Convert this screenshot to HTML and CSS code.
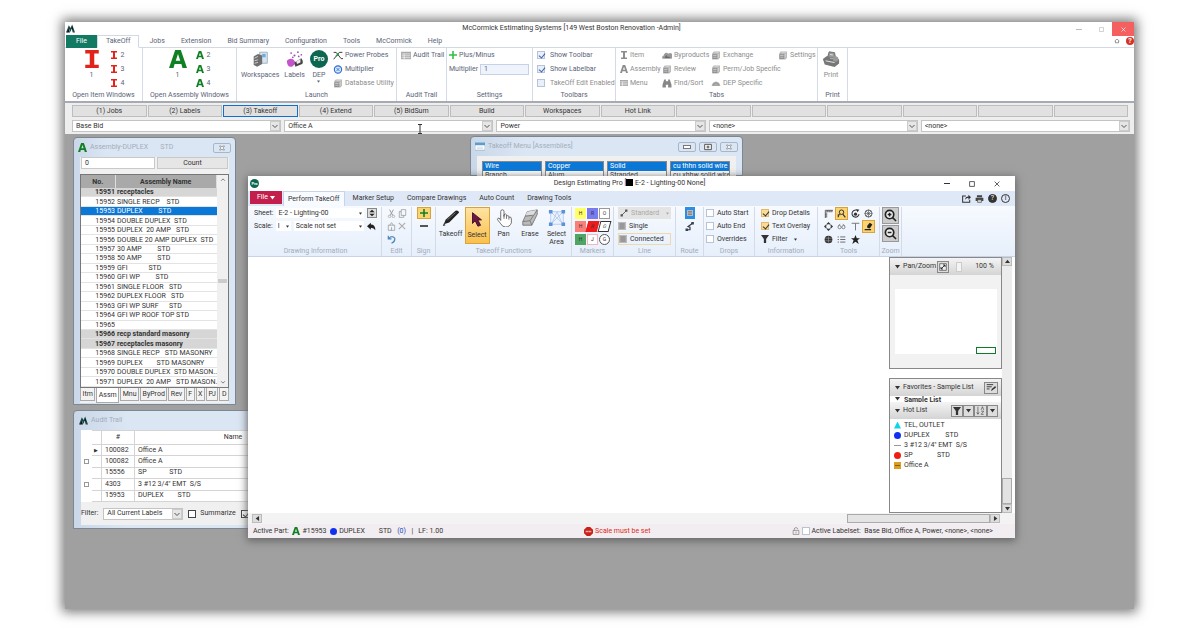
FILE: index.html
```
<!DOCTYPE html>
<html lang="en">
  <head>
    <meta charset="UTF-8" />
    <meta name="viewport" content="width=device-width, initial-scale=1.0" />
    <title>McCormick Estimating Systems</title>
    <link rel="stylesheet" href="styles.css">
  </head>
  <body>
    <svg class="defs" width="0" height="0" aria-hidden="true">
      <symbol id="logo" viewBox="0 0 16 16"><path d="M0 15 5 2l3 5 3-6 5 14h-4l-2-7-2 6-3-6-2 7z" fill="#17494a"/><path d="M2 15 5 7l2 8zM10 8l1-4 2 6z" fill="#111"/></symbol>
      <symbol id="beamI" viewBox="0 0 12 16"><path d="M0 0h12v3H8v10h4v3H0v-3h4V3H0z" fill="currentColor"/></symbol>
      <symbol id="bigA" viewBox="0 0 16 16"><path fill-rule="evenodd" d="M5.500 0h5L16 16h-4l-1-3.500H5L4 16H0zM8 3.500 6 9.500h4z" fill="currentColor"/></symbol>
      <symbol id="chev" viewBox="0 0 8 8"><path d="m1.500 3 2.500 2.500L6.500 3" fill="none" stroke="#555"/></symbol>
      <symbol id="down" viewBox="0 0 8 8"><path d="M0 1.500h8L4 7z" fill="currentColor"/></symbol>
      <symbol id="xmark" viewBox="0 0 10 10"><path d="m1 1 8 8M9 1 1 9" fill="none" stroke="currentColor" stroke-width="1.300"/></symbol>
      <symbol id="boxmark" viewBox="0 0 10 10"><path d="M1 1h8v8H1z" fill="none" stroke="currentColor" stroke-width="1.300"/></symbol>
      <symbol id="restore" viewBox="0 0 12 10"><path d="M1 1h10v8H1z" fill="#fff" stroke="#555" stroke-width="1.500"/><path d="M4 3h4v4H4z" fill="#777"/></symbol>
      <symbol id="shutx" viewBox="0 0 12 10"><path d="M1 1h3l2 2 2-2h3L8 5l3 4H8L6 7 4 9H1l3-4z" fill="#fff" stroke="#555"/></symbol>
      <symbol id="sheet" viewBox="0 0 16 12"><path d="M0 0h16v12H0z" fill="currentColor"/><path d="M1 3.500h14M1 6.500h14M1 9.500h14M5 3v9" stroke="#fff"/></symbol>
      <symbol id="menuwin" viewBox="0 0 16 14"><path d="M0 1h16v12H0z" fill="#fff" stroke="#7ba9cc"/><path d="M0 1h16v4H0z" fill="#5d9ccb"/><path d="M3 8h10M3 10.500h10" stroke="#b8c8d6"/></symbol>
      <symbol id="stack" viewBox="0 0 16 16"><path d="M4 1h11v11l-3 3H1V5z" fill="#b5b5b5"/><path d="M2 6h8v8H2z" fill="#8d8d8d"/><path d="M5 3h8M3 8h6M3 11h6M12 5v7" stroke="#eee"/></symbol>
      <symbol id="cloud" viewBox="0 0 16 12"><path d="M1 11a3 3 0 0 1 2-5 4 4 0 0 1 7-3 4 4 0 0 1 5 8z" fill="#999"/><path d="m4 10 3-5 3 5zM9 10l2-3 2 3z" fill="#666"/></symbol>
      <symbol id="disk" viewBox="0 0 16 12"><path d="M1 10a7 7 0 0 1 14 0z" fill="#bbb"/><path d="M3 10a5 5 0 0 1 10 0M8 3v7M5 5v5m6-5v5" fill="none" stroke="#8a8a8a"/></symbol>
      <symbol id="bino" viewBox="0 0 16 16"><path d="M3 1h3v3h4V1h3l3 9v5h-6v-5H6v5H0v-5z" fill="#888"/></symbol>
      <symbol id="printer" viewBox="0 0 20 18"><path d="m8 1 6 1 1 6H6z" fill="#999" stroke="#666"/><path d="m1 9 4-3h3l1 3h6l2-2 2 3v4l-5 4L3 15z" fill="#777"/><path d="m4 11 10 2M9 4l3 .5" stroke="#eee"/><circle cx="15" cy="9" r="3" fill="#999"/></symbol>
      <symbol id="probe" viewBox="0 0 16 14"><path d="M1 2h4l8 10h3M1 13l5-6 4-5h5" fill="none" stroke="#333" stroke-width="1.500"/><path d="m5 8 4-4" stroke="#2a9a3c" stroke-width="2.500"/></symbol>
      <symbol id="multi" viewBox="0 0 16 16"><circle cx="8" cy="8" r="6.500" fill="#d9e9ff" stroke="#2b6cd4" stroke-width="2"/><path d="m5 5 6 6m0-6-6 6" stroke="#2b6cd4" stroke-width="1.500"/></symbol>
      <symbol id="work" viewBox="0 0 20 20"><path d="M9 2h9v13H9z" fill="#d5e5f2" stroke="#9ab"/><path d="m2 7 5-3 5 2v10l-6 3-4-2z" fill="#6e6e6e"/><path d="m3 9 4-2M3 12l4-1M3 15l4-1" stroke="#ddd"/><path d="M12 4h4v4h-4z" fill="#6faad8"/></symbol>
      <symbol id="labels" viewBox="0 0 20 20"><path d="M1 12q4-4 8-1l3 4-5 4q-6 1-6-7z" fill="#c455c9"/><path d="m10 14 8-5q3 4 1 7l-8 3z" fill="#444"/><path d="m12 13 5-3v4l-4 2z" fill="#eee"/><g fill="#9a4bb4"><circle cx="6" cy="3" r="1"/><circle cx="10" cy="6" r="1.200"/><circle cx="14" cy="2" r="1"/><circle cx="15" cy="7" r="1"/><circle cx="8" cy="8" r="1"/><circle cx="18" cy="5" r="1"/></g></symbol>
      <symbol id="plus" viewBox="0 0 10 10"><path d="M5 0v10M0 5h10" stroke="currentColor" stroke-width="2"/></symbol>
      <symbol id="home" viewBox="0 0 10 8"><path d="m1 4 4-3 4 3M2.500 4v3h5V4" fill="none" stroke="#555"/></symbol>
      <symbol id="updown" viewBox="0 0 12 10"><path d="m2 4 4-4 4 4zM2 6l4 4 4-4z" fill="#222"/></symbol>
      <symbol id="back" viewBox="0 0 14 12"><path d="M6 0v3q7 0 7 9-2-4-7-4v3L0 5.500z" fill="#222"/></symbol>
      <symbol id="cut" viewBox="0 0 14 14"><path d="m4 1 5 9M10 1 5 10" stroke="#999" stroke-width="1.500"/><circle cx="4" cy="11.500" r="2" fill="none" stroke="#999"/><circle cx="10" cy="11.500" r="2" fill="none" stroke="#999"/></symbol>
      <symbol id="copy" viewBox="0 0 14 14"><path d="M5 1h7v9H5zM5 4H2v9h7v-3" fill="none" stroke="#888"/></symbol>
      <symbol id="paste" viewBox="0 0 14 14"><path d="M2 5h10v8H2zM4 5l3-4 3 4M7 8v5" fill="none" stroke="#888"/></symbol>
      <symbol id="undo" viewBox="0 0 14 14"><path d="M2 1v5h5M3 5q5-5 9 0 1 5-5 8" fill="none" stroke="#4a86b8" stroke-width="1.800"/></symbol>
      <symbol id="pen" viewBox="0 0 20 20"><path d="m2 17 2-5L15 2q3-1 4 2L8 15z" fill="#222"/><path d="m1 19 1-3 2 2z" fill="#222"/><path d="m6 12 9-8" stroke="#777"/></symbol>
      <symbol id="arrow" viewBox="0 0 14 20"><path d="M2 3v12l3-3 3 6 3-1-3-6h4z" fill="#6b1743" stroke="#3d1029"/></symbol>
      <symbol id="hand" viewBox="0 0 20 22"><path d="M6 14V3q0-2 2-2t2 2v6-2q2-2 3 0v2q2-2 3 0v1q3-1 3 2v5q-2 5-7 5-4 0-6-4l-4-5q0-2 2-2z" fill="#fff" stroke="#555"/><path d="M10 8v4m3-3v3m3-2v3" stroke="#555"/></symbol>
      <symbol id="erase" viewBox="0 0 20 20"><path d="m7 3 11-2v5L12 18H2v-4z" fill="#bbb" stroke="#777"/><path d="m2 14 8-1 8-12M10 13l2 5M5 8l8-1" fill="none" stroke="#777"/><path d="m7 3 10-2-3 5-9 1z" fill="#ddd"/></symbol>
      <symbol id="area" viewBox="0 0 20 20"><path d="M3 3h14v14H3zM3 3l14 14M17 3 3 17M10 3 4 17M10 3l6 14" fill="#eaf3ff" stroke="#b5cceb"/><g fill="#5d93d6"><path d="M1 1h4v4H1zM15 1h4v4h-4zM1 15h4v4H1zM15 15h4v4h-4z"/></g></symbol>
      <symbol id="line" viewBox="0 0 14 14"><path d="m3 11 8-8" stroke="#555" stroke-width="1.500"/><path d="M1 9h4v4H1zM9 1h4v4H9z" fill="#555"/></symbol>
      <symbol id="para" viewBox="0 0 12 12"><path d="M0 0h12v12H0z" fill="#bbb"/><path d="M2 3h8M2 6h8M2 9h8" stroke="#555"/></symbol>
      <symbol id="route" viewBox="0 0 14 14"><path d="M2 12h5V8l-3-1 7-5" fill="none" stroke="#334" stroke-width="1.800"/><path d="M9 0h4v4H9zM0 10h4v4H0z" fill="#345"/></symbol>
      <symbol id="funnel" viewBox="0 0 14 14"><path d="M0 0h14L9 7v7H5V7z" fill="#333"/></symbol>
      <symbol id="ruler" viewBox="0 0 14 14"><path d="M2 14V2h12v3H5v9z" fill="#bbb"/><path d="M2 2h12M2 2v12M5 2v3m3-3v3m3-3v3M2 8h3m-3 3h3" stroke="#333"/></symbol>
      <symbol id="find" viewBox="0 0 14 14"><circle cx="7" cy="5" r="3.500" fill="none" stroke="#333" stroke-width="1.500"/><path d="m9 8 4 5M2 13V9h3" stroke="#333" stroke-width="1.800" fill="none"/></symbol>
      <symbol id="spin" viewBox="0 0 14 14"><path d="M9 2a5.500 5.500 0 1 0 3.500 6" fill="none" stroke="#333" stroke-width="1.600"/><circle cx="7" cy="8" r="2.500" fill="#333"/><path d="m8 0 5 1-3 4z" fill="#333"/></symbol>
      <symbol id="globe" viewBox="0 0 14 14"><circle cx="7" cy="7" r="5.500" fill="none" stroke="#444" stroke-width="1.300"/><path d="M7 1v12M1 7h12M3 3l8 8m0-8-8 8" stroke="#555"/></symbol>
      <symbol id="target" viewBox="0 0 14 14"><path d="m7 0 3 3H4zM7 14l3-3H4zM0 7l3-3v6zM14 7l-3-3v6z" fill="#333"/><circle cx="7" cy="7" r="4" fill="none" stroke="#444"/></symbol>
      <symbol id="glasses" viewBox="0 0 14 14"><circle cx="4" cy="8" r="2.500" fill="none" stroke="#555"/><circle cx="10" cy="8" r="2.500" fill="none" stroke="#555"/><path d="m2 6 3-3m7 3L9 3" stroke="#555"/></symbol>
      <symbol id="tee" viewBox="0 0 14 14"><path d="M1 2h12M7 2v11" stroke="#777" stroke-width="1.500"/></symbol>
      <symbol id="mark" viewBox="0 0 14 14"><path d="m5 6 4-5 4 3-4 6-4-1zM1 11h10v2H1z" fill="#222"/></symbol>
      <symbol id="ball" viewBox="0 0 14 14"><circle cx="7" cy="7" r="6" fill="#333"/><path d="M2 5h10M2 9h10M7 2v10" stroke="#999"/></symbol>
      <symbol id="list" viewBox="0 0 14 14"><path d="M1 3h2m2 0h8M1 7h2m2 0h8M1 11h2m2 0h8" stroke="#555" stroke-width="1.300"/></symbol>
      <symbol id="star" viewBox="0 0 14 14"><path d="m7 0 2 5h5l-4 3 2 6-5-3.500L2 14l2-6-4-3h5z" fill="#222"/></symbol>
      <symbol id="zin" viewBox="0 0 14 14"><circle cx="6" cy="6" r="4.500" fill="#eee" stroke="#222" stroke-width="1.800"/><path d="m9 9 4 4M4 6h4M6 4v4" stroke="#222" stroke-width="1.600"/></symbol>
      <symbol id="zout" viewBox="0 0 14 14"><circle cx="6" cy="6" r="4.500" fill="#eee" stroke="#222" stroke-width="1.800"/><path d="m9 9 4 4M4 6h4" stroke="#222" stroke-width="1.600"/></symbol>
      <symbol id="share" viewBox="0 0 14 14"><path d="M6 3H1v10h11V9" fill="none" stroke="#333" stroke-width="1.600"/><path d="M5 9q0-5 5-5V1l4 4-4 4V6q-3 0-5 3z" fill="#333"/></symbol>
      <symbol id="print2" viewBox="0 0 14 14"><path d="M3 2h8v3H3zM1 6h12v5H1z" fill="#444"/><path d="M4 9h6v4H4z" fill="#ddd" stroke="#444"/></symbol>
      <symbol id="grow" viewBox="0 0 12 12"><path d="M1 1h10v10H1z" fill="#eee" stroke="#444"/><path d="m3 9 6-6M6 3h3v3M3 6v3h3" fill="none" stroke="#222" stroke-width="1.300"/></symbol>
      <symbol id="edit" viewBox="0 0 14 12"><path d="M1 2h9M1 5h7M1 8h4" stroke="#333" stroke-width="1.300"/><path d="m7 11 1-3 5-4 1 2-5 4z" fill="#333"/></symbol>
      <symbol id="sort" viewBox="0 0 14 14"><path d="M3 1v11M1 10l2 3 2-3M8 6l2-5 2 5M8 8h4l-4 5h4" fill="none" stroke="#444"/></symbol>
      <symbol id="lock" viewBox="0 0 12 14"><path d="M1 6h10v7H1zM3 6V4q0-3 3-3t3 3M6 8v3" fill="none" stroke="#666"/></symbol>
      <symbol id="stop" viewBox="0 0 16 16"><path d="M5 0h6l5 5v6l-5 5H5l-5-5V5z" fill="#c9201a"/><path d="M3 8h10" stroke="#f7c9c6" stroke-width="3" stroke-dasharray="2 .7"/></symbol>
    </svg>

    <main class="app">
      <header class="titlebar">
        <svg class="i9"><use href="#logo"/></svg>
        <h1>McCormick Estimating Systems [149 West Boston Renovation -Admin]</h1>
        <div class="app-controls">
          <button aria-label="Minimize"><i class="dash"></i></button>
          <button aria-label="Maximize"><svg class="i5"><use href="#boxmark"/></svg></button>
          <button class="shut" aria-label="Close"><svg class="i5"><use href="#xmark"/></svg></button>
        </div>
      </header>

      <nav class="tabs">
        <button class="file">File</button>
        <button class="on">TakeOff</button>
        <button>Jobs</button>
        <button>Extension</button>
        <button>Bid Summary</button>
        <button>Configuration</button>
        <button>Tools</button>
        <button>McCormick</button>
        <button>Help</button>
        <span class="push"></span>
        <svg class="i6"><use href="#home"/></svg>
        <span class="help">?</span>
      </nav>

      <section class="ribbon">
        <div class="group g-item">
          <div class="tools">
            <button class="big red"><svg class="glyph"><use href="#beamI"/></svg>1</button>
            <div class="col red">
              <button><svg class="i8"><use href="#beamI"/></svg>2</button>
              <button><svg class="i8"><use href="#beamI"/></svg>3</button>
              <button><svg class="i8"><use href="#beamI"/></svg>4</button>
            </div>
          </div>
          <h2>Open Item Windows</h2>
        </div>
        <div class="group g-asm">
          <div class="tools">
            <button class="big green"><svg class="glyph"><use href="#bigA"/></svg>1</button>
            <div class="col green">
              <button><svg class="i8"><use href="#bigA"/></svg>2</button>
              <button><svg class="i8"><use href="#bigA"/></svg>3</button>
              <button><svg class="i8"><use href="#bigA"/></svg>4</button>
            </div>
          </div>
          <h2>Open Assembly Windows</h2>
        </div>
        <div class="group g-launch">
          <div class="tools">
            <button class="big"><svg class="glyph"><use href="#work"/></svg>Workspaces</button>
            <button class="big"><svg class="glyph"><use href="#labels"/></svg>Labels</button>
            <button class="big"><span class="pro">Pro</span>DEP<svg class="i3"><use href="#down"/></svg></button>
            <div class="col">
              <button><svg class="i10"><use href="#probe"/></svg>Power Probes</button>
              <button><svg class="i10"><use href="#multi"/></svg>Multiplier</button>
              <button class="off"><svg class="i10"><use href="#stack"/></svg>Database Utility</button>
            </div>
          </div>
          <h2>Launch</h2>
        </div>
        <div class="group g-audit">
          <div class="tools">
            <div class="col"><button><svg class="i10 silver"><use href="#sheet"/></svg>Audit Trail</button></div>
          </div>
          <h2>Audit Trail</h2>
        </div>
        <div class="group g-set">
          <div class="tools">
            <div class="col">
              <button><svg class="i8 lime"><use href="#plus"/></svg>Plus/Minus</button>
              <div class="field"><label for="mult">Multiplier</label><input id="mult" type="text" value="1"></div>
            </div>
          </div>
          <h2>Settings</h2>
        </div>
        <div class="group g-bars">
          <div class="tools">
            <div class="col">
              <label><input type="checkbox" checked>Show Toolbar</label>
              <label><input type="checkbox" checked>Show Labelbar</label>
              <label class="off"><input type="checkbox" disabled>TakeOff Edit Enabled</label>
            </div>
          </div>
          <h2>Toolbars</h2>
        </div>
        <div class="group g-tabs">
          <div class="tools off">
            <div class="col">
              <button><svg class="i8"><use href="#beamI"/></svg>Item</button>
              <button><svg class="i8"><use href="#bigA"/></svg>Assembly</button>
              <button><svg class="i8 silver"><use href="#sheet"/></svg>Menu</button>
            </div>
            <div class="col">
              <button><svg class="i10"><use href="#cloud"/></svg>Byproducts</button>
              <button><svg class="i10"><use href="#stack"/></svg>Review</button>
              <button><svg class="i10"><use href="#bino"/></svg>Find/Sort</button>
            </div>
            <div class="col">
              <button><svg class="i10"><use href="#stack"/></svg>Exchange</button>
              <button><svg class="i10"><use href="#stack"/></svg>Perm/Job Specific</button>
              <button><svg class="i10"><use href="#disk"/></svg>DEP Specific</button>
            </div>
            <div class="col"><button><svg class="i10"><use href="#stack"/></svg>Settings</button></div>
          </div>
          <h2>Tabs</h2>
        </div>
        <div class="group g-print">
          <div class="tools off">
            <button class="big"><svg class="glyph"><use href="#printer"/></svg>Print</button>
          </div>
          <h2>Print</h2>
        </div>
      </section>

      <div class="quick">
        <button>(1) Jobs</button>
        <button>(2) Labels</button>
        <button class="on">(3) Takeoff</button>
        <button>(4) Extend</button>
        <button>(5) BidSum</button>
        <button>Build</button>
        <button>Workspaces</button>
        <button>Hot Link</button>
        <button aria-label="Unused"></button>
        <button aria-label="Unused"></button>
        <button aria-label="Unused"></button>
        <button aria-label="Unused"></button>
        <button aria-label="Unused"></button>
        <button aria-label="Unused"></button>
      </div>

      <div class="labelbar">
        <div class="combo"><select aria-label="Label 1"><option>Base Bid</option></select><svg><use href="#chev"/></svg></div>
        <div class="combo"><select aria-label="Label 2"><option>Office A</option></select><svg><use href="#chev"/></svg></div>
        <div class="combo"><select aria-label="Label 3"><option>Power</option></select><svg><use href="#chev"/></svg></div>
        <div class="combo"><select aria-label="Label 4"><option>&lt;none&gt;</option></select><svg><use href="#chev"/></svg></div>
        <div class="combo"><select aria-label="Label 5"><option>&lt;none&gt;</option></select><svg><use href="#chev"/></svg></div>
      </div>

      <div class="desk">
        <!-- assembly list -->
        <section class="win win-asm">
          <header>
            <svg class="i9 green"><use href="#bigA"/></svg>
            <h2>Assembly-DUPLEX &nbsp; &nbsp; &nbsp; STD</h2>
            <button aria-label="Close"><svg class="i6"><use href="#shutx"/></svg></button>
          </header>
          <div class="count">
            <input type="text" value="0" aria-label="Quantity">
            <button>Count</button>
          </div>
          <div class="list">
            <table>
              <thead><tr><th>No.</th><th>Assembly Name</th></tr></thead>
              <tbody>
                <tr class="head"><td>15951</td><td>receptacles</td></tr>
                <tr><td>15952</td><td>SINGLE RECP    STD</td></tr>
                <tr class="sel"><td>15953</td><td>DUPLEX         STD</td></tr>
                <tr><td>15954</td><td>DOUBLE DUPLEX  STD</td></tr>
                <tr><td>15955</td><td>DUPLEX  20 AMP   STD</td></tr>
                <tr><td>15956</td><td>DOUBLE 20 AMP DUPLEX  STD</td></tr>
                <tr><td>15957</td><td>30 AMP         STD</td></tr>
                <tr><td>15958</td><td>50 AMP         STD</td></tr>
                <tr><td>15959</td><td>GFI            STD</td></tr>
                <tr><td>15960</td><td>GFI WP         STD</td></tr>
                <tr><td>15961</td><td>SINGLE FLOOR   STD</td></tr>
                <tr><td>15962</td><td>DUPLEX FLOOR   STD</td></tr>
                <tr><td>15963</td><td>GFI WP SURF      STD</td></tr>
                <tr><td>15964</td><td>GFI WP ROOF TOP STD</td></tr>
                <tr><td>15965</td><td></td></tr>
                <tr class="head"><td>15966</td><td>recp standard masonry</td></tr>
                <tr class="head"><td>15967</td><td>receptacles masonry</td></tr>
                <tr><td>15968</td><td>SINGLE RECP   STD MASONRY</td></tr>
                <tr><td>15969</td><td>DUPLEX        STD MASONRY</td></tr>
                <tr><td>15970</td><td>DOUBLE DUPLEX  STD MASON...</td></tr>
                <tr><td>15971</td><td>DUPLEX  20 AMP   STD MASON...</td></tr>
              </tbody>
            </table>
            <div class="vbar"><svg class="i6 flip"><use href="#chev"/></svg><i></i><svg class="i6"><use href="#chev"/></svg></div>
          </div>
          <div class="pages">
            <button>Itm</button><button class="on">Assm</button><button>Mnu</button><button>ByProd</button><button>Rev</button><button>F</button><button>X</button><button>PJ</button><button>D</button>
          </div>
        </section>

        <!-- takeoff menu -->
        <section class="win win-menu">
          <header>
            <svg class="i10"><use href="#menuwin"/></svg>
            <h2>Takeoff Menu [Assemblies]</h2>
            <button aria-label="Minimize"><i class="pill"></i></button>
            <button aria-label="Restore"><svg class="i8"><use href="#restore"/></svg></button>
            <button aria-label="Close"><svg class="i6"><use href="#shutx"/></svg></button>
          </header>
          <div class="menus">
            <ul><li>Wire</li><li>Branch</li></ul>
            <ul><li>Copper</li><li>Alum</li></ul>
            <ul><li>Solid</li><li>Stranded</li></ul>
            <ul><li>cu thhn solid wire</li><li>cu xhhw solid wire</li></ul>
          </div>
        </section>

        <!-- audit trail -->
        <section class="win win-audit">
          <header>
            <svg class="i9"><use href="#logo"/></svg>
            <h2>Audit Trail</h2>
          </header>
          <table>
            <thead><tr><th></th><th></th><th>#</th><th>Name</th></tr></thead>
            <tbody>
              <tr><td></td><td>&#9654;</td><td>100082</td><td>Office A</td></tr>
              <tr><td><i class="node"></i></td><td></td><td>100082</td><td>Office A</td></tr>
              <tr><td></td><td></td><td>15556</td><td>SP             STD</td></tr>
              <tr><td><i class="node"></i></td><td></td><td>4303</td><td>3 #12 3/4" EMT  S/S</td></tr>
              <tr><td></td><td></td><td>15953</td><td>DUPLEX        STD</td></tr>
            </tbody>
          </table>
          <div class="filter">
            <label for="filter">Filter:</label>
            <div class="combo"><select id="filter"><option>All Current Labels</option></select><svg><use href="#chev"/></svg></div>
            <label><input type="checkbox">Summarize</label>
            <label><input type="checkbox" checked>N</label>
          </div>
        </section>

        <!-- design estimating pro -->
        <section class="dep">
          <header>
            <span class="pro mini">Pro</span>
            <h2>Design Estimating Pro [<i class="black"></i> E-2 - Lighting-00 None]</h2>
            <div class="dep-controls">
              <button aria-label="Minimize"><i class="dash"></i></button>
              <button aria-label="Maximize"><svg class="i6"><use href="#boxmark"/></svg></button>
              <button aria-label="Close"><svg class="i6"><use href="#xmark"/></svg></button>
            </div>
          </header>
          <nav class="dep-tabs">
            <button class="file">File <svg class="i5"><use href="#down"/></svg></button>
            <button class="on">Perform TakeOff</button>
            <button>Marker Setup</button>
            <button>Compare Drawings</button>
            <button>Auto Count</button>
            <button>Drawing Tools</button>
            <span class="push"></span>
            <svg class="i9"><use href="#share"/></svg>
            <svg class="i9"><use href="#print2"/></svg>
            <span class="dot dark">?</span>
            <span class="dot">i</span>
          </nav>

          <div class="dep-ribbon">
            <div class="group d-info">
              <div class="tools">
                <div class="col">
                  <div class="field">
                    <label for="sheetSel">Sheet:</label>
                    <div class="pick wide"><select id="sheetSel"><option>E-2 - Lighting-00</option></select><svg class="i3"><use href="#down"/></svg></div>
                    <button class="boxed" aria-label="Step sheet"><svg class="i8"><use href="#updown"/></svg></button>
                  </div>
                  <div class="field">
                    <label for="scaleSel">Scale:</label>
                    <div class="pick slim"><select id="scaleSel"><option>I</option></select><svg class="i3"><use href="#down"/></svg></div>
                    <div class="pick"><select aria-label="Scale value"><option>Scale not set</option></select><svg class="i3"><use href="#down"/></svg></div>
                    <button aria-label="Revert"><svg class="i9"><use href="#back"/></svg></button>
                  </div>
                </div>
              </div>
              <h3>Drawing Information</h3>
            </div>
            <div class="group d-edit">
              <div class="tools cells two">
                <svg class="i9"><use href="#cut"/></svg><svg class="i9"><use href="#copy"/></svg>
                <svg class="i9"><use href="#paste"/></svg><svg class="i8 silver"><use href="#xmark"/></svg>
                <svg class="i9"><use href="#undo"/></svg>
              </div>
              <h3>Edit</h3>
            </div>
            <div class="group d-sign">
              <div class="tools col">
                <button class="gold" aria-label="Add"><svg class="i8 green"><use href="#plus"/></svg></button>
                <button aria-label="Subtract"><i class="minus"></i></button>
              </div>
              <h3>Sign</h3>
            </div>
            <div class="group d-func">
              <div class="tools">
                <button class="big"><svg class="glyph"><use href="#pen"/></svg>Takeoff</button>
                <button class="big gold"><svg class="glyph"><use href="#arrow"/></svg>Select</button>
                <button class="big"><svg class="glyph"><use href="#hand"/></svg>Pan</button>
                <button class="big"><svg class="glyph"><use href="#erase"/></svg>Erase</button>
                <button class="big"><svg class="glyph"><use href="#area"/></svg>Select<br>Area</button>
              </div>
              <h3>Takeoff Functions</h3>
            </div>
            <div class="group d-mark">
              <div class="tools cells three">
                <b class="m yellow">H</b><b class="m indigo">R</b><b class="m">O</b>
                <b class="m pink">H</b><b class="m skew fill">R</b><b class="m skew">G</b>
                <b class="m leaf">H</b><b class="m rose">J</b><b class="m round">G</b>
              </div>
              <h3>Markers</h3>
            </div>
            <div class="group d-line">
              <div class="tools">
                <div class="col">
                  <div class="pick grey"><svg class="i8"><use href="#line"/></svg><select aria-label="Line style" disabled><option>Standard</option></select><svg class="i3"><use href="#down"/></svg></div>
                  <button><svg class="i8"><use href="#para"/></svg>Single</button>
                  <button class="edge"><svg class="i8"><use href="#para"/></svg>Connected</button>
                </div>
              </div>
              <h3>Line</h3>
            </div>
            <div class="group d-route">
              <div class="tools col">
                <button class="blueb" aria-label="Route list"><svg class="i6"><use href="#para"/></svg></button>
                <button aria-label="Route path"><svg class="i10"><use href="#route"/></svg></button>
              </div>
              <h3>Route</h3>
            </div>
            <div class="group d-drops">
              <div class="tools">
                <div class="col">
                  <label><input type="checkbox">Auto Start</label>
                  <label><input type="checkbox">Auto End</label>
                  <label><input type="checkbox">Overrides</label>
                </div>
              </div>
              <h3>Drops</h3>
            </div>
            <div class="group d-facts">
              <div class="tools">
                <div class="col">
                  <label><input type="checkbox" checked>Drop Details</label>
                  <label><input type="checkbox" checked>Text Overlay</label>
                  <button><svg class="i8"><use href="#funnel"/></svg>Filter &nbsp;<svg class="i3"><use href="#down"/></svg></button>
                </div>
              </div>
              <h3>Information</h3>
            </div>
            <div class="group d-tools">
              <div class="tools cells four">
                <svg class="i9"><use href="#ruler"/></svg><span class="gold"><svg class="i9"><use href="#find"/></svg></span><svg class="i9"><use href="#spin"/></svg><svg class="i9"><use href="#globe"/></svg>
                <svg class="i9"><use href="#target"/></svg><svg class="i9"><use href="#glasses"/></svg><svg class="i9"><use href="#tee"/></svg><span class="gold"><svg class="i9"><use href="#mark"/></svg></span>
                <svg class="i9"><use href="#ball"/></svg><svg class="i9"><use href="#list"/></svg><svg class="i9"><use href="#star"/></svg>
              </div>
              <h3>Tools</h3>
            </div>
            <div class="group d-zoom">
              <div class="tools col">
                <button aria-label="Zoom in"><svg class="i12"><use href="#zin"/></svg></button>
                <button aria-label="Zoom out"><svg class="i12"><use href="#zout"/></svg></button>
              </div>
              <h3>Zoom</h3>
            </div>
          </div>

          <div class="view">
            <div class="canvas"></div>
            <aside class="side">
              <section class="pane panzoom">
                <header><svg class="i5"><use href="#down"/></svg><h3>Pan/Zoom</h3><button class="boxed" aria-label="Fit"><svg class="i8"><use href="#grow"/></svg></button><i class="blank"></i><span>100 %</span></header>
                <div class="map"><div class="paper"><i></i></div></div>
              </section>
              <section class="pane lists">
                <header><svg class="i5"><use href="#down"/></svg><h3>Favorites - Sample List</h3><button class="boxed" aria-label="Edit list"><svg class="i10"><use href="#edit"/></svg></button></header>
                <div class="peek"><svg class="i5"><use href="#down"/></svg>Sample List</div>
                <header><svg class="i5"><use href="#down"/></svg><h3>Hot List</h3><button class="boxed" aria-label="Filter"><svg class="i8"><use href="#funnel"/></svg></button><button class="boxed thin" aria-label="Filter options"><svg class="i5"><use href="#down"/></svg></button><button class="boxed" aria-label="Sort"><svg class="i9"><use href="#sort"/></svg></button><button class="boxed thin" aria-label="Sort options"><svg class="i5"><use href="#down"/></svg></button></header>
                <ul>
                  <li><i class="tri"></i>TEL, OUTLET</li>
                  <li><i class="disc"></i>DUPLEX         STD</li>
                  <li><i class="wire"></i>3 #12 3/4" EMT  S/S</li>
                  <li><i class="disc hot"></i>SP              STD</li>
                  <li><i class="tag"></i>Office A</li>
                </ul>
              </section>
            </aside>
            <div class="scroll-y"><span><svg class="i5 flip"><use href="#down"/></svg></span><i></i><span><svg class="i5"><use href="#down"/></svg></span></div>
          </div>
          <div class="scroll-x"><span><svg class="i5 left"><use href="#down"/></svg></span><i></i><span><svg class="i5 right"><use href="#down"/></svg></span></div>
          <footer>
            <div class="bit">Active Part: <svg class="i8 green"><use href="#bigA"/></svg>#15953 <i class="disc"></i>DUPLEX        STD  <em>(0)</em>  |   LF: 1.00</div>
            <div class="bit warn"><svg class="i9"><use href="#stop"/></svg>Scale must be set</div>
            <div class="bit end"><svg class="i8"><use href="#lock"/></svg><label><input type="checkbox">Active Labelset: &nbsp;Base Bid, Office A, Power, &lt;none&gt;, &lt;none&gt;</label></div>
          </footer>
        </section>
      </div>

      <svg class="ibeam" viewBox="0 0 6 10"><path d="M1 .5h4M3 .5v9M1 9.500h4" fill="none" stroke="#333"/></svg>
    </main>
  </body>
</html>
```
FILE: styles.css
```
* {
  box-sizing: border-box;
  margin: 0;
  padding: 0;
}
body {
  background: #fff;
  color: #333;
  font: 7px/9px Roboto, "Open Sans", sans-serif;
  height: 100vh;
  padding: 22px 66px 21px 65px;
}
h1, h2, h3 {
  font-size: 7px;
  font-weight: 400;
}
button, input, select {
  background: none;
  border: 0;
  color: inherit;
  font: inherit;
}
button {
  align-items: center;
  display: flex;
  justify-content: center;
  white-space: nowrap;
}
select {
  appearance: none;
  flex: 1;
  min-width: 0;
  opacity: 1;
}
ul {
  list-style: none;
}
svg {
  flex: none;
}
label {
  align-items: center;
  display: flex;
  white-space: nowrap;
}
input[type="checkbox"] {
  appearance: none;
  background: #fff;
  border: 1px solid #b9c3d6;
  flex: none;
  height: 8px;
  width: 8px;
}
input[type="checkbox"]:checked::after {
  border: solid #333;
  border-width: 0 1px 1px 0;
  content: "";
  display: block;
  height: 5px;
  margin-left: 2px;
  transform: rotate(40deg);
  width: 3px;
}
.defs {
  position: absolute;
}
.i3 { height: 3px; width: 3px; }
.i5 { height: 5px; width: 5px; }
.i6 { height: 6px; width: 6px; }
.i8 { height: 8px; width: 8px; }
.i9 { height: 9px; width: 9px; }
.i10 { height: 9px; width: 10px; }
.i12 { height: 13px; width: 13px; }
.flip { transform: rotate(180deg); }
.left { transform: rotate(90deg); }
.right { transform: rotate(-90deg); }
.red svg { color: #e2231a; }
.green svg, svg.green { color: #118024; }
.lime { color: #35c048; }
.silver { color: #aaa; }
.push { flex: 1; }
.gold {
  background: #fcd371;
  border: 1px solid #d9a33c;
}
.dash {
  background: currentColor;
  height: 1px;
  width: 6px;
}

/* main window */
.app {
  background: #a0a0a0;
  box-shadow: 0 0 11px 3px #777;
  display: flex;
  flex-direction: column;
  height: 100%;
  min-height: 560px;
  position: relative;
}
.titlebar {
  align-items: center;
  background: #fff;
  display: flex;
  height: 13px;
  padding-left: 1px;
}
.titlebar h1 {
  flex: 1;
  text-align: center;
}
.app-controls {
  align-self: flex-start;
  color: #bbb;
  display: flex;
  height: 14px;
  z-index: 1;
}
.app-controls button {
  width: 22px;
}
.app-controls .shut {
  background: #f4605f;
  color: #fff;
}
.tabs {
  align-items: center;
  background: #fff;
  border-bottom: 1px solid #d3d9e3;
  color: #5b6478;
  display: flex;
  flex: none;
  height: 13px;
  padding-left: 1px;
}
.tabs button {
  height: 13px;
  padding: 0 8px;
}
.tabs .file {
  background: #127a63;
  color: #fff;
  padding: 0 10px;
}
.tabs .on {
  background: #fff;
  border: 1px solid #d3d9e3;
  border-bottom-color: #fff;
  margin-right: 2px;
}
.help {
  background: #d93025;
  border-radius: 50%;
  color: #fff;
  font-weight: 700;
  height: 8px;
  line-height: 8px;
  margin-left: 6px;
  text-align: center;
  width: 8px;
}
.ribbon {
  background: #fff;
  border-bottom: 2px solid #a6abb3;
  color: #5b6478;
  display: flex;
  flex: none;
}
.group {
  border-right: 1px solid #d5dbe6;
  display: flex;
  flex: none;
  flex-direction: column;
}
.group h2, .group h3 {
  line-height: 10px;
  text-align: center;
  white-space: nowrap;
}
.tools {
  display: flex;
  height: 42px;
}
.col {
  display: flex;
  flex-direction: column;
}
.ribbon .group {
  height: 53px;
  padding: 0 4px;
}
.ribbon .col button, .ribbon .col label, .ribbon .field {
  align-items: center;
  display: flex;
  gap: 2px;
  height: 14px;
  justify-content: flex-start;
}
.ribbon .col label {
  gap: 5px;
}
.ribbon .off, .off label {
  color: #8d8d8d;
}
.big {
  flex-direction: column;
  justify-content: flex-start;
}
.glyph, .pro {
  height: 18px;
  margin: 2px 0 3px;
  width: 18px;
}
.ribbon .g-item { width: 78px; }
.ribbon .g-asm { width: 94px; }
.ribbon .g-launch { width: 160px; }
.ribbon .g-audit { width: 50px; }
.ribbon .g-set { width: 86px; padding: 0 2px; }
.ribbon .g-bars { width: 83px; }
.ribbon .g-tabs { width: 202px; }
.ribbon .g-print { width: 30px; }
.g-item .tools, .g-asm .tools {
  gap: 9px;
  justify-content: center;
}
.g-item .col button, .g-asm .col button {
  gap: 3px;
}
.g-launch .tools {
  gap: 5px;
}
.g-launch .glyph {
  width: 17px;
}
.pro {
  background: #0d6650;
  border-radius: 50%;
  color: #fff;
  font-weight: 700;
  line-height: 18px;
  text-align: center;
}
.g-tabs .tools {
  display: grid;
  grid-template-columns: 42px 49px 67px 1fr;
}
.field input {
  background: #eef3fc;
  border: 1px solid #c5d2ea;
  height: 11px;
  padding-left: 3px;
  width: 49px;
}
.ribbon input[type="checkbox"] {
  background: #e9f0fb;
}
.ribbon input:checked::after {
  border-color: #3c64b5;
}

.quick {
  background: #eee;
  display: grid;
  flex: none;
  gap: 1px;
  grid-template-columns: repeat(14, 1fr);
  padding: 2px 6px 1px 7px;
}
.quick button {
  background: #e1e1e1;
  border: 1px solid #bdbdbd;
  height: 12px;
}
.quick .on {
  border: 1px solid #0f6fd0;
}
.labelbar {
  background: #eee;
  display: grid;
  flex: none;
  gap: 3px;
  grid-template-columns: repeat(5, 1fr);
  padding: 2px 4px 2px 7px;
}
.combo {
  background: #fff;
  border: 1px solid #c4c4c4;
  display: flex;
  height: 12px;
}
.combo select {
  padding-left: 3px;
}
.combo svg {
  background: #e6e6e6;
  border: 1px solid #ccc;
  height: 10px;
  margin-left: -10px;
  pointer-events: none;
  width: 10px;
}
.ibeam {
  height: 10px;
  left: 352px;
  position: absolute;
  top: 102px;
  width: 6px;
}

/* child windows */
.desk {
  flex: 1;
  overflow: hidden;
  position: relative;
}
.win {
  background: linear-gradient(90deg, #c9d7e8, #dbe6f4 20%, #dbe6f4);
  border: 1px solid #7d8792;
  border-radius: 4px 4px 0 0;
  padding: 0 6px;
  position: absolute;
}
.win > header {
  align-items: center;
  color: #a3adba;
  display: flex;
  gap: 3px;
  height: 19px;
  margin: 0 -2px;
}
.win > header h2 {
  flex: 1;
}
.win > header button {
  border: 1px solid #a9b6c8;
  border-radius: 2px;
  color: #555;
  height: 10px;
  width: 18px;
}
.pill {
  background: #fff;
  border: 1px solid #777;
  height: 4px;
  width: 8px;
}
.win table {
  border-collapse: collapse;
  table-layout: fixed;
  width: 100%;
}
.win td {
  white-space: pre;
}
.win-asm {
  height: 268px;
  left: 8px;
  top: 3px;
  width: 163px;
}
.count {
  background: #f0f0f0;
  display: flex;
  gap: 2px;
  padding: 0 1px 5px;
}
.count input, .count button {
  border: 1px solid #c9c9c9;
  flex: 1;
  height: 12px;
  min-width: 0;
}
.count input {
  background: #fff;
  padding-left: 3px;
}
.count button {
  background: #e6e6e6;
}
.list {
  background: #fff;
  border: 1px solid #777;
  display: flex;
}
.list table {
  flex: 1;
  height: 212px;
  line-height: 8px;
  min-width: 0;
}
.list th {
  background: #a9a9a9;
  border-right: 1px solid #ddd;
  height: 13px;
}
.list th:first-child {
  width: 34px;
}
.list td {
  border-bottom: 1px solid #e3e3e3;
  overflow: hidden;
}
.list td:first-child {
  text-align: right;
}
.list td:last-child {
  padding-left: 2px;
}
.list .head {
  background: #d6d6d6;
  font-weight: 700;
}
.list .sel {
  background: #0b78d8;
  color: #fff;
}
.vbar {
  align-items: center;
  background: #f0f0f0;
  display: flex;
  flex: none;
  flex-direction: column;
  justify-content: space-between;
  padding: 2px 1px;
  width: 11px;
}
.vbar i {
  background: #ccc;
  height: 4px;
  width: 9px;
}
.pages {
  background: #f0f0f0;
  display: flex;
  gap: 1px;
}
.pages button {
  background: #f3f3f3;
  border: 1px solid #aaa;
  border-top: 0;
  flex: auto;
  height: 13px;
}
.pages .on {
  background: #fff;
  height: 15px;
}
.win-menu {
  height: 40px;
  left: 405px;
  top: 2px;
  width: 273px;
}
.menus {
  background: #f0f0f0;
  display: grid;
  gap: 3px;
  grid-template-columns: 60px 59px 60px 60px;
  justify-content: space-between;
  padding: 5px 8px 0 5px;
}
.menus ul {
  background: #fff;
  border: 1px solid #888;
  border-bottom: 0;
  height: 15px;
  line-height: 9px;
  overflow: hidden;
  white-space: nowrap;
}
.menus li {
  padding-left: 2px;
}
.menus li:first-child {
  background: #0b78d8;
  color: #fff;
}
.win-audit {
  height: 119px;
  left: 8px;
  padding: 0 7px;
  top: 276px;
  width: 267px;
}
.win-audit table {
  background: #fff;
  height: 72px;
}
.win-audit th {
  font-weight: 400;
  height: 14px;
}
.win-audit th, .win-audit td {
  border: 1px solid #d4d4d4;
  line-height: 9px;
}
.win-audit td {
  padding-left: 3px;
}
.win-audit th:nth-child(1) { width: 10px; }
.win-audit th:nth-child(2) { width: 10px; }
.win-audit th:nth-child(3) { width: 33px; }
.win-audit td:nth-child(-n + 2) {
  font-size: 5px;
  padding-left: 2px;
}
.win-audit td:first-child, .win-audit th:first-child {
  border-color: #fff;
}
.node {
  border: 1px solid #999;
  display: block;
  height: 5px;
  width: 5px;
}
.filter {
  align-items: center;
  background: #f0f0f0;
  display: flex;
  gap: 5px;
  height: 23px;
}
.filter .combo {
  width: 80px;
}
.filter label {
  gap: 4px;
}
.filter input {
  border-color: #444;
}

/* design estimating pro */
.dep {
  background: #fff;
  box-shadow: 0 2px 8px 1px #666;
  display: flex;
  flex-direction: column;
  height: 362px;
  left: 183px;
  position: absolute;
  top: 42px;
  width: 767px;
}
.dep > header {
  align-items: center;
  display: grid;
  flex: none;
  grid-template-columns: 1fr auto 1fr;
  height: 15px;
  padding: 0 6px 0 2px;
}
.mini {
  font-size: 4px;
  height: 9px;
  line-height: 9px;
  margin: 0;
  width: 9px;
}
.black {
  background: #000;
  display: inline-block;
  height: 7px;
  vertical-align: -1px;
  width: 7px;
}
.dep-controls {
  display: flex;
  justify-content: flex-end;
}
.dep-controls button {
  width: 25px;
}
.dep-tabs {
  align-items: center;
  background: #dfe8f6;
  display: flex;
  flex: none;
  gap: 3px;
  height: 15px;
  padding: 0 5px 0 2px;
}
.dep-tabs button {
  height: 15px;
  padding: 0 5px;
}
.dep-tabs .file {
  align-self: flex-start;
  background: #c31f4c;
  color: #fff;
  gap: 2px;
  height: 13px;
  padding: 0 7px;
}
.dep-tabs .on {
  background: #f7faff;
  border: 1px solid #c6d3e8;
  border-bottom: 0;
  margin-left: -2px;
  padding: 0 4px;
}
.dep-tabs .push ~ * {
  margin-left: 1px;
}
.dot {
  border: 1px solid #333;
  border-radius: 50%;
  height: 9px;
  line-height: 7px;
  text-align: center;
  width: 9px;
}
.dark {
  background: #333;
  color: #fff;
}
.dep-ribbon {
  background: linear-gradient(#f7faff, #e6effb);
  border-bottom: 1px solid #c6d3e8;
  display: flex;
  flex: none;
  height: 51px;
  padding: 1px 2px 0;
}
.dep-ribbon h3 {
  color: #a2acbb;
}
.dep-ribbon .tools {
  height: 39px;
}
.dep-ribbon .group {
  padding: 0 4px;
}
.dep-ribbon .col > * {
  align-items: center;
  display: flex;
  gap: 3px;
  height: 12px;
  justify-content: flex-start;
  margin-bottom: 1px;
}
.dep-ribbon .d-info { width: 132px; }
.dep-ribbon .d-edit { width: 30px; }
.dep-ribbon .d-sign { width: 24px; }
.dep-ribbon .d-func { width: 136px; padding: 0 2px; }
.dep-ribbon .d-mark { width: 42px; padding: 0 3px; }
.dep-ribbon .d-line { width: 62px; }
.dep-ribbon .d-route { width: 28px; }
.dep-ribbon .d-drops { width: 51px; padding: 0 2px; }
.dep-ribbon .d-facts { width: 63px; padding: 0 6px; }
.dep-ribbon .d-tools { width: 62px; }
.dep-ribbon .d-zoom { width: 22px; padding: 0 1px; }
.pick {
  align-items: center;
  background: #fff;
  display: flex;
  height: 10px;
  padding: 0 2px;
  width: 70px;
}
.wide { width: 88px; }
.slim { width: 15px; }
.boxed {
  background: #ddd;
  border: 1px solid #888;
  flex: none;
}
.grey {
  background: #e4e4e4;
  color: #aaa;
  width: 53px;
}
.edge {
  border: 1px solid #ecd9ad;
}
.cells {
  align-content: start;
  align-items: center;
  display: grid;
  gap: 1px;
  grid-auto-rows: 12px;
  justify-items: center;
}
.two { grid-template-columns: 1fr 1fr; }
.three { grid-template-columns: repeat(3, 1fr); }
.four { grid-template-columns: repeat(4, 1fr); }
.cells .gold {
  display: flex;
  padding: 1px;
}
.dep-ribbon .d-sign .col, .dep-ribbon .d-route .col, .dep-ribbon .d-zoom .col {
  align-items: center;
}
.d-sign button {
  justify-content: center;
  padding: 1px 2px;
}
.minus {
  background: #555;
  height: 2px;
  width: 8px;
}
.d-func .tools {
  justify-content: space-between;
}
.d-func .big {
  line-height: 8px;
  width: 25px;
}
.d-func .gold {
  background: linear-gradient(#fde3a2, #fbc04d);
  height: 37px;
}
.m {
  background: #fff;
  border: 1px solid #999;
  font-size: 5px;
  font-weight: 400;
  height: 11px;
  line-height: 9px;
  text-align: center;
  width: 11px;
}
.yellow { background: #ffff66; border-color: #ffff66; }
.indigo { background: #7a7af0; border-color: #7a7af0; }
.pink { background: #f88078; border-color: #f88078; }
.leaf { background: #4fa564; border-color: #4fa564; }
.rose { border-color: #f3b6c0; }
.skew { border-color: #333; transform: skewX(-15deg); }
.fill { background: #ee1c1c; border-color: #ee1c1c; }
.round { border-color: #555; border-radius: 50%; }
.blueb {
  background: #2b8de3;
  padding: 0 2px;
}
.d-facts input {
  background: #fcdc94;
  border-color: #e2b968;
}
.dep-ribbon .d-zoom button {
  background: #ccc;
  border: 1px solid #999;
  height: 17px;
  justify-content: center;
  width: 17px;
}
.view {
  display: flex;
  flex: 1;
  min-height: 0;
  padding-right: 3px;
}
.canvas {
  flex: 1;
}
.side {
  display: flex;
  flex-direction: column;
  gap: 9px;
  width: 113px;
}
.pane {
  border: 1px solid #888;
}
.pane header {
  align-items: center;
  background: linear-gradient(#f4f4f4, #d4d4d4);
  display: flex;
  height: 17px;
  padding: 0 3px 0 5px;
}
.pane h3 {
  flex: 1;
  margin-left: 3px;
}
.pane .boxed {
  height: 12px;
  padding: 0 1px;
}
.pane .thin {
  padding: 0 2px;
}
.panzoom h3 {
  flex: none;
  margin-right: 1px;
}
.blank {
  background: #f4f4f4;
  border: 1px solid #ccc;
  height: 10px;
  margin: 0 13px 0 7px;
  width: 6px;
}
.map {
  background: #f2f2f2;
  height: 93px;
  padding: 14px 4px 17px 5px;
}
.paper {
  align-items: flex-end;
  background: #fff;
  display: flex;
  height: 65px;
  justify-content: flex-end;
  padding-right: 1px;
}
.paper i {
  border: 1px solid #117a2a;
  height: 7px;
  width: 20px;
}
.lists {
  flex: 1;
}
.peek {
  display: flex;
  font-weight: 700;
  gap: 4px;
  height: 6px;
  overflow: hidden;
  padding-left: 5px;
}
.lists ul {
  padding: 1px 4px;
}
.lists li {
  align-items: center;
  display: flex;
  gap: 3px;
  height: 10px;
  white-space: pre;
}
.disc, .tri, .wire, .tag {
  background: #1230f0;
  flex: none;
  height: 7px;
  width: 7px;
}
.disc { border-radius: 50%; }
.hot { background: #f01d12; }
.tri {
  background: #10d5ea;
  clip-path: polygon(50% 0, 100% 100%, 0 100%);
}
.wire {
  background: #999;
  height: 1px;
}
.tag {
  background: #dc9d20;
  border: solid #dc9d20;
  border-width: 3px 1px;
  box-shadow: inset 0 0 0 1px #8a5c08;
}
.scroll-y {
  align-items: stretch;
  background: #ececec;
  display: flex;
  flex-direction: column;
  width: 10px;
}
.scroll-y i {
  background: #e2e2e2;
  border: 1px solid #aaa;
  height: 26px;
  margin-top: auto;
}
.scroll-y span, .scroll-x span {
  align-items: center;
  background: #ddd;
  border: 1px solid #bbb;
  display: flex;
  flex: none;
  height: 9px;
  justify-content: center;
}
.scroll-x {
  background: #f3f3f3;
  display: flex;
  flex: none;
  height: 11px;
  padding: 1px 15px 1px 4px;
}
.scroll-x span {
  width: 10px;
}
.scroll-x i {
  background: #e4e4e4;
  border: 1px solid #aaa;
  margin-left: auto;
  width: 143px;
}
.dep footer {
  align-items: center;
  background: #f2edf0;
  display: flex;
  flex: none;
  height: 14px;
  justify-content: space-between;
  padding: 0 22px 0 5px;
}
.bit {
  align-items: center;
  display: flex;
  gap: 2px;
  white-space: pre;
}
.bit label {
  gap: 2px;
}
.bit em {
  color: #1a49b8;
  font-style: normal;
}
.warn {
  color: #e02a20;
}
```
